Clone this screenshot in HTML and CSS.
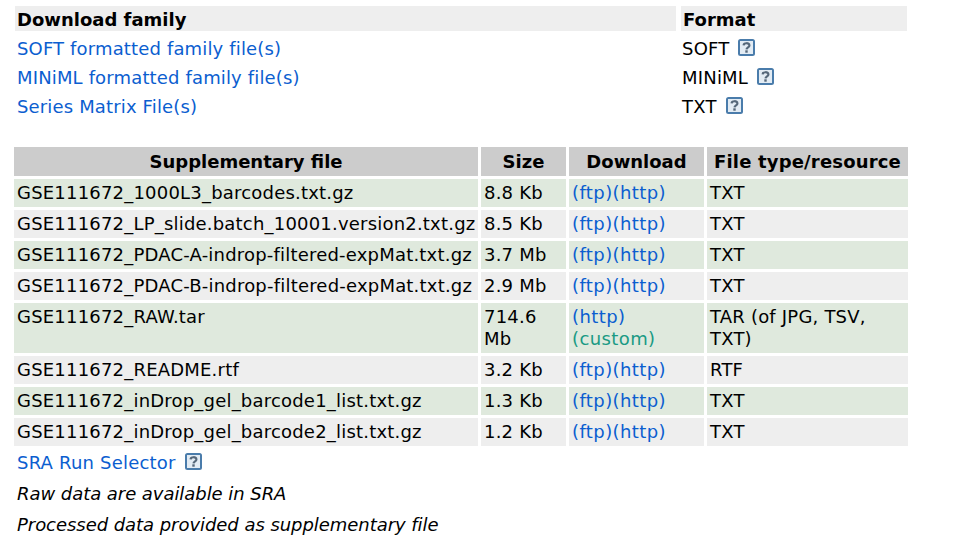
FILE: index.html
```html
<!DOCTYPE html>
<html lang="en">
<head>
<meta charset="utf-8">
<title>GSE111672 downloads</title>
<link rel="stylesheet" href="styles.css">
</head>
<body>
<table class="family">
  <colgroup><col class="f1"><col class="f2"></colgroup>
  <tr class="fhead"><th>Download family</th><th>Format</th></tr>
  <tr><td><a href="#">SOFT formatted family file(s)</a></td><td class="fmt">SOFT <svg class="help" viewBox="0 0 17 17"><use href="#q"/></svg></td></tr>
  <tr><td><a href="#">MINiML formatted family file(s)</a></td><td class="fmt">MINiML <svg class="help" viewBox="0 0 17 17"><use href="#q"/></svg></td></tr>
  <tr><td><a href="#">Series Matrix File(s)</a></td><td class="fmt">TXT <svg class="help" viewBox="0 0 17 17"><use href="#q"/></svg></td></tr>
</table>
<table class="supp">
  <colgroup><col class="s1"><col class="s2"><col class="s3"><col class="s4"></colgroup>
  <tr class="shead"><th>Supplementary file</th><th>Size</th><th>Download</th><th class="wide">File type/resource</th></tr>
  <tr class="g"><td>GSE111672_1000L3_barcodes.txt.gz</td><td>8.8 Kb</td><td><a href="#">(ftp)</a><a href="#">(http)</a></td><td>TXT</td></tr>
  <tr class="w"><td>GSE111672_LP_slide.batch_10001.version2.txt.gz</td><td>8.5 Kb</td><td><a href="#">(ftp)</a><a href="#">(http)</a></td><td>TXT</td></tr>
  <tr class="g"><td>GSE111672_PDAC-A-indrop-filtered-expMat.txt.gz</td><td>3.7 Mb</td><td><a href="#">(ftp)</a><a href="#">(http)</a></td><td>TXT</td></tr>
  <tr class="w"><td>GSE111672_PDAC-B-indrop-filtered-expMat.txt.gz</td><td>2.9 Mb</td><td><a href="#">(ftp)</a><a href="#">(http)</a></td><td>TXT</td></tr>
  <tr class="g"><td>GSE111672_RAW.tar</td><td>714.6 Mb</td><td><a href="#">(http)</a><br><a class="custom" href="#">(custom)</a></td><td>TAR (of JPG, TSV, TXT)</td></tr>
  <tr class="w"><td>GSE111672_README.rtf</td><td>3.2 Kb</td><td><a href="#">(ftp)</a><a href="#">(http)</a></td><td>RTF</td></tr>
  <tr class="g"><td>GSE111672_inDrop_gel_barcode1_list.txt.gz</td><td>1.3 Kb</td><td><a href="#">(ftp)</a><a href="#">(http)</a></td><td>TXT</td></tr>
  <tr class="w"><td>GSE111672_inDrop_gel_barcode2_list.txt.gz</td><td>1.2 Kb</td><td><a href="#">(ftp)</a><a href="#">(http)</a></td><td>TXT</td></tr>
</table>
<p class="line"><a href="#">SRA Run Selector</a> <svg class="help" viewBox="0 0 17 17"><use href="#q"/></svg></p>
<p class="line note">Raw data are available in SRA</p>
<p class="line note">Processed data provided as supplementary file</p>
<svg class="defs" width="0" height="0" aria-hidden="true">
  <symbol id="q" viewBox="0 0 17 17">
    <rect x="0" y="0" width="17" height="17" rx="2.5" fill="#4a7cab"/>
    <rect x="2" y="2" width="13" height="13" fill="#e3ecf4"/>
    <path d="M5.6 6.4 C5.7 3.6 11.4 3.4 11.4 6.4 C11.4 8.4 8.6 8.2 8.5 10.4" fill="none" stroke="#56687a" stroke-width="2.2"/>
    <rect x="7.3" y="11.3" width="2.4" height="2.4" fill="#56687a"/>
  </symbol>
</svg>
</body>
</html>
```
FILE: styles.css
```css
html, body { margin: 0; padding: 0; background: #fff; }
body {
  font-family: "DejaVu Sans", Verdana, sans-serif;
  font-size: 18px;
  letter-spacing: 0.2px;
  color: #000;
  padding: 6px 0 0 14px;
  width: 943px;
  height: 538px;
  box-sizing: border-box;
  overflow: hidden;
}
a { color: #0b5ed0; text-decoration: none; }
a.custom { color: #1a9a84; }
table { border-collapse: separate; table-layout: fixed; }
th, td { padding: 0; vertical-align: top; text-align: left; font-weight: normal; }
th { letter-spacing: 0; }

.family { border-spacing: 5px 0; margin-left: -4px; width: 902px; }
.f1 { width: 661px; }
.f2 { width: 226px; }
.family th { background: #eeeeee; font-weight: bold; height: 25px; box-sizing: border-box; line-height: 23px; padding: 2px 0 0 2px; }
.family td { height: 29px; line-height: 22px; padding: 7px 0 0 2px; box-sizing: border-box; white-space: nowrap; overflow: hidden; }
.family td a { letter-spacing: 0.15px; }
.family td.fmt { padding-left: 1px; }

.supp { border-spacing: 3px; margin: 26px 0 -2px -3px; width: 900px; }
.s1 { width: 464px; }
.s2 { width: 85px; }
.s3 { width: 135px; }
.s4 { width: 201px; }
.supp th { background: #cccccc; font-weight: bold; text-align: center; height: 28px; line-height: 29px; }
.supp th.wide { letter-spacing: 0.17px; }
.supp td { height: 28px; line-height: 22px; padding: 3px; box-sizing: border-box; }
.supp a { letter-spacing: 0.4px; }
.g td { background: #dfe9dd; }
.w td { background: #eeeeee; }

.help { width: 17px; height: 17px; margin: -4px 0 -2px 3px; vertical-align: 1px; }
.defs { position: absolute; }

.line { margin: 0; padding-left: 3px; height: 31px; line-height: 31px; }
.note { font-style: italic; letter-spacing: -0.05px; }
```
